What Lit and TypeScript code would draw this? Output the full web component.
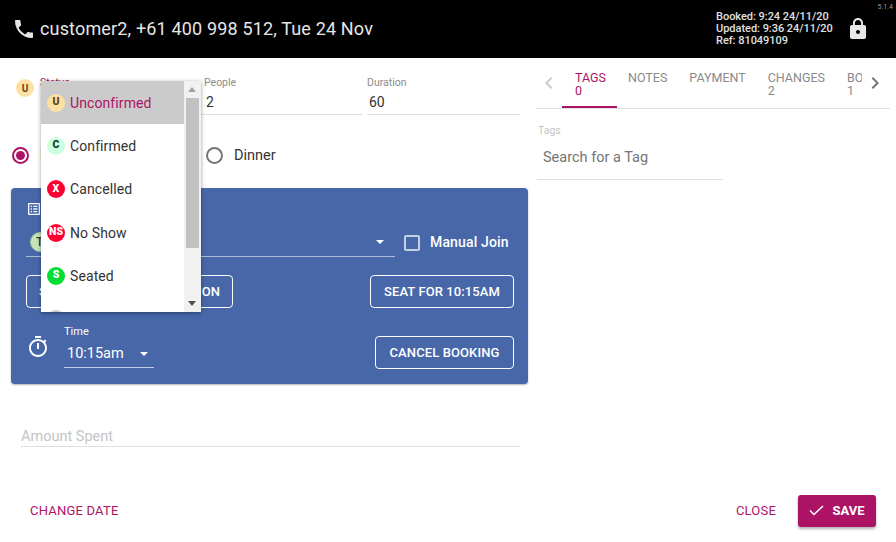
import { LitElement, html, css, svg } from "lit";
import { customElement } from "lit/decorators.js";

const icon = (d: string, size: number) => html`<svg width=${size} height=${size} viewBox="0 0 24 24" fill="currentColor">${svg`<path d=${d}></path>`}</svg>`;

const PHONE = "M6.62 10.79c1.44 2.83 3.76 5.14 6.59 6.59l2.2-2.2c.27-.27.67-.36 1.02-.24 1.12.37 2.33.57 3.57.57.55 0 1 .45 1 1V20c0 .55-.45 1-1 1-9.39 0-17-7.61-17-17 0-.55.45-1 1-1h3.5c.55 0 1 .45 1 1 0 1.25.2 2.45.57 3.57.11.35.03.74-.25 1.02l-2.2 2.2z";
const LOCK = "M18 8h-1V6c0-2.76-2.24-5-5-5S7 3.24 7 6v2H6c-1.1 0-2 .9-2 2v10c0 1.1.9 2 2 2h12c1.1 0 2-.9 2-2V10c0-1.1-.9-2-2-2zm-6 9c-1.1 0-2-.9-2-2s.9-2 2-2 2 .9 2 2-.9 2-2 2zm3.1-9H8.9V6c0-1.71 1.39-3.1 3.1-3.1 1.71 0 3.1 1.39 3.1 3.1v2z";
const TIMER = "M15 1H9v2h6V1zm-4 13h2V8h-2v6zm8.03-6.61l1.42-1.42c-.43-.51-.9-.99-1.41-1.41l-1.42 1.42C16.07 4.74 14.12 4 12 4c-4.97 0-9 4.03-9 9s4.02 9 9 9 9-4.03 9-9c0-2.12-.74-4.07-1.97-5.61zM12 20c-3.87 0-7-3.13-7-7s3.13-7 7-7 7 3.13 7 7-3.13 7-7 7z";
const LIST = "M19 5v14H5V5h14m1.1-2H3.9c-.5 0-.9.4-.9.9v16.2c0 .4.4.9.9.9h16.2c.4 0 .9-.5.9-.9V3.9c0-.5-.5-.9-.9-.9zM11 7h6v2h-6V7zm0 4h6v2h-6v-2zm0 4h6v2h-6zM7 7h2v2H7zm0 4h2v2H7zm0 4h2v2H7z";
const LEFT = "M15.41 7.41L14 6l-6 6 6 6 1.41-1.41L10.83 12z";
const RIGHT = "M10 6L8.59 7.41 13.17 12l-4.58 4.59L10 18l6-6z";

const MENU = [
  { l: "U", t: "Unconfirmed", bg: "#ffe0a3", fg: "#5a4a20", sel: true },
  { l: "C", t: "Confirmed", bg: "#ccffe0", fg: "#1d3b2c" },
  { l: "X", t: "Cancelled", bg: "#ff0033", fg: "#fff" },
  { l: "NS", t: "No Show", bg: "#ff0033", fg: "#fff" },
  { l: "S", t: "Seated", bg: "#00dd33", fg: "#fff" },
  { l: "F", t: "Finished", bg: "#cccccc", fg: "#fff" },
];

@customElement("app-root")
export class AppRoot extends LitElement {
  static styles = css`
    :host { display: block; height: 542px; width: 896px; overflow: hidden; position: relative; background: #fff; font-family: Roboto, sans-serif; color: rgba(0,0,0,.87); }
    * { box-sizing: border-box; }
    svg { display: block; }
    .header { height: 58px; background: #000; color: #e6e6e6; display: flex; align-items: center; padding-left: 12px; position: relative; }
    .title { font-size: 18px; letter-spacing: .16px; margin-left: 4px; flex: 1; white-space: nowrap; line-height: 24px; }
    .meta { font-size: 11px; letter-spacing: -.03px; line-height: 12px; font-weight: 500; color: #e0e0e0; width: 130px; }
    .lock { margin-right: 26px; color: #e8e8e8; }
    .version { position: absolute; right: 3px; top: 3px; font-size: 7px; line-height: 8px; color: #999; }
    .main { display: flex; height: 389px; }
    .left { width: 536px; flex: none; display: flex; flex-direction: column; }
    .right { flex: 1; min-width: 0; padding-right: 6px; }

    .top-row { display: flex; height: 57px; padding: 15px 0 0 16px; }
    .status-dot { width: 18px; height: 18px; border-radius: 50%; background: #ffe0a3; color: #5a4a20; font-size: 10px; font-weight: 700; display: flex; align-items: center; justify-content: center; margin-top: 6px; margin-right: 6px; flex: none; }
    .field { display: flex; flex-direction: column; border-bottom: 1px solid #e0e0e0; height: 42px; }
    .f-status { width: 164px; }
    .f-people { width: 159px; margin-right: 4px; }
    .f-duration { width: 153px; }
    .flabel { font-size: 10.5px; line-height: 12px; color: #8c8c8c; margin-top: 4px; }
    .flabel.active { color: #ad1365; }
    .fvalue { font-size: 14px; line-height: 20px; margin: 3px 0 0 2px; color: #333; }
    .radios { height: 73px; padding: 7px 0 0 12px; display: flex; align-items: center; font-size: 14.5px; color: #333; }
    .radio { width: 17px; height: 17px; border-radius: 50%; border: 2px solid #757575; flex: none; display: flex; align-items: center; justify-content: center; }
    .radio.on { border-color: #ad1365; }
    .radio.on::after { content: ""; width: 9px; height: 9px; border-radius: 50%; background: #ad1365; }
    .r1 { display: flex; align-items: center; gap: 11px; width: 194px; }
    .r2 { display: flex; align-items: center; gap: 11px; }

    .card { margin-left: 11px; width: 517px; height: 196px; background: #4767a9; border-radius: 4px; box-shadow: 0 1px 2px rgba(0,0,0,.3); padding: 12px 14px 0 15px; color: #fff; flex: none; }
    .card-head { height: 17px; display: flex; align-items: center; padding-left: 1px; font-size: 12px; gap: 6px; }
    .list-ic { color: #f4f6fb; margin-left: -1px; }
    .select-row { display: flex; align-items: center; height: 40px; }
    .select { width: 369px; height: 40px; border-bottom: 1px solid #aebcd9; display: flex; align-items: center; padding: 11px 11px 0 4px; flex: none; margin-right: 9px; justify-content: space-between; }
    .chip { width: 22px; height: 20px; border-radius: 10px; background: #c3e4bb; border: 1px solid #9fc797; color: #333; font-size: 12px; font-weight: 500; padding-left: 5px; line-height: 18px; }
    .arrow { width: 0; height: 0; border-left: 4.5px solid transparent; border-right: 4.5px solid transparent; border-top: 4.5px solid #fff; }
    .checkbox { width: 16px; height: 16px; border: 2px solid #c5cfe3; border-radius: 2px; flex: none; margin-right: 10px; margin-top: 12px; }
    .cb-label { font-size: 14px; font-weight: 500; letter-spacing: .15px; margin-top: 10px; white-space: nowrap; }
    .btn-row { display: flex; justify-content: space-between; margin-top: 18px; }
    .obtn { height: 33px; border: 1px solid #fff; border-radius: 4px; background: transparent; color: #fff; font: 500 13px Roboto, sans-serif; letter-spacing: .1px; display: inline-flex; align-items: center; justify-content: center; white-space: nowrap; padding: 0 0 1px; }
    .b1 { width: 207px; }
    .b2 { width: 144px; }
    .b3 { width: 139px; margin-top: 11px; }
    .time-row { display: flex; justify-content: space-between; margin-top: 17px; height: 46px; }
    .time-left { display: flex; }
    .timer { margin-top: 10px; }
    .time-col { margin-left: 14px; width: 90px; }
    .tlabel { font-size: 11px; line-height: 12px; margin-top: 1px; }
    .tsel { height: 28px; margin-top: 2px; border-bottom: 1px solid #c3cfe6; display: flex; align-items: center; justify-content: space-between; padding: 0 6px 0 3px; font-size: 14.5px; }

    .amount { margin: 42px 0 0 21px; width: 499px; height: 21px; border-bottom: 1px solid #e0e0e0; font-size: 14.5px; line-height: 20px; padding-top: 1px; color: #c4c4c4; flex: none; }
    .footer { display: flex; align-items: center; height: 32px; margin-top: 48px; padding: 0 20px 0 19px; }
    .tbtn { font-size: 13px; letter-spacing: .2px; color: #ad1365; padding: 0 11px 2px; }
    .actions { margin-left: auto; display: flex; align-items: center; }
    .save { width: 78px; height: 32px; background: #ad1365; color: #fff; border-radius: 3px; box-shadow: 0 2px 3px rgba(0,0,0,.3); display: flex; align-items: center; justify-content: center; gap: 8px; font-size: 13px; font-weight: 700; margin-left: 11px; padding-bottom: 1px; }

    .tabs { height: 51px; display: flex; border-bottom: 1px solid #e0e0e0; align-items: flex-start; }
    .chev { width: 26px; height: 50px; display: flex; align-items: center; justify-content: center; flex: none; }
    .chev.off { color: #ccc; }
    .chev.on { color: #757575; width: 28px; padding-right: 2px; }
    .tab-list { flex: 1; min-width: 0; display: flex; overflow: hidden; height: 50px; }
    .tab { font-size: 12.5px; line-height: 13px; color: #8a8a8a; padding: 13px 11px 0 11px; white-space: nowrap; height: 50px; flex: none; }
    .tab.active { color: #ad1365; border-bottom: 2px solid #ad1365; padding-left: 13px; }
    .tags { margin-left: 1px; width: 186px; height: 71px; border-bottom: 1px solid #e0e0e0; padding-top: 16px; }
    .tags-label { font-size: 10.5px; line-height: 12px; color: #c4c4c4; margin-left: 1px; }
    .tags-input { font-size: 14.5px; line-height: 20px; color: #757575; margin: 11px 0 0 6px; }

    .menu { position: absolute; left: 41px; top: 81px; width: 160px; height: 231px; background: #fff; box-shadow: 0 1px 4px rgba(0,0,0,.4); overflow: hidden; display: flex; }
    .items { width: 143px; flex: none; }
    .item { height: 43.3px; display: flex; align-items: center; padding-left: 6px; gap: 5px; font-size: 14px; color: #333; letter-spacing: .1px; white-space: nowrap; }
    .item.sel { background: #cbcbcb; color: #ad1365; }
    .dot { width: 18px; height: 18px; border-radius: 50%; display: flex; align-items: center; justify-content: center; font-size: 10.5px; font-weight: 900; padding-bottom: 2px; flex: none; }
    .scroll { width: 17px; background: #f1f1f1; position: relative; }
    .thumb { position: absolute; left: 2px; top: 17px; width: 13px; height: 150px; background: #c1c1c1; }
    .up { position: absolute; top: 6px; left: 4px; border-left: 4px solid transparent; border-right: 4px solid transparent; border-bottom: 5px solid #a3a3a3; }
    .down { position: absolute; bottom: 6px; left: 4px; border-left: 4px solid transparent; border-right: 4px solid transparent; border-top: 5px solid #505050; }
  `;

  render() {
    return html`
      <div class="header">
        ${icon(PHONE, 24)}
        <div class="title">customer2, +61 400 998 512, Tue 24 Nov</div>
        <div class="meta">Booked: 9:24 24/11/20<br />Updated: 9:36 24/11/20<br />Ref: 81049109</div>
        <span class="lock">${icon(LOCK, 24)}</span>
        <div class="version">5.1.4</div>
      </div>
      <div class="main">
        <div class="left">
          <div class="top-row">
            <div class="status-dot">U</div>
            <div class="field f-status"><div class="flabel active">Status</div></div>
            <div class="field f-people"><div class="flabel">People</div><div class="fvalue">2</div></div>
            <div class="field f-duration"><div class="flabel">Duration</div><div class="fvalue">60</div></div>
          </div>
          <div class="radios">
            <div class="r1"><span class="radio on"></span><span>Lunch</span></div>
            <div class="r2"><span class="radio"></span><span>Dinner</span></div>
          </div>
          <div class="card">
            <div class="card-head"><span class="list-ic">${icon(LIST, 16)}</span><span>Table</span></div>
            <div class="select-row">
              <div class="select"><span class="chip">T</span><span class="arrow"></span></div>
              <span class="checkbox"></span><span class="cb-label">Manual Join</span>
            </div>
            <div class="btn-row">
              <button class="obtn b1">SEAT FOR FULL RESERVATION</button>
              <button class="obtn b2">SEAT FOR 10:15AM</button>
            </div>
            <div class="time-row">
              <div class="time-left">
                <span class="timer">${icon(TIMER, 24)}</span>
                <div class="time-col">
                  <div class="tlabel">Time</div>
                  <div class="tsel"><span>10:15am</span><span class="arrow"></span></div>
                </div>
              </div>
              <button class="obtn b3">CANCEL BOOKING</button>
            </div>
          </div>
          <div class="amount">Amount Spent</div>
        </div>
        <div class="right">
          <div class="tabs">
            <div class="chev off">${icon(LEFT, 24)}</div>
            <div class="tab-list">
              <div class="tab active">TAGS<br />0</div>
              <div class="tab">NOTES</div>
              <div class="tab">PAYMENT</div>
              <div class="tab">CHANGES<br />2</div>
              <div class="tab">BOOKINGS<br />1</div>
            </div>
            <div class="chev on">${icon(RIGHT, 24)}</div>
          </div>
          <div class="tags">
            <div class="tags-label">Tags</div>
            <div class="tags-input">Search for a Tag</div>
          </div>
        </div>
      </div>
      <div class="footer">
        <span class="tbtn">CHANGE DATE</span>
        <div class="actions">
          <span class="tbtn">CLOSE</span>
          <div class="save">
            <svg width="15" height="11" viewBox="0 0 15 11" fill="none" stroke="currentColor" stroke-width="1.5">${svg`<path d="M1 5.5L5 9.5L14 1"></path>`}</svg>
            <span>SAVE</span>
          </div>
        </div>
      </div>
      <div class="menu">
        <div class="items">
          ${MENU.map(
            (m) => html`<div class="item ${m.sel ? "sel" : ""}">
              <span class="dot" style="background:${m.bg};color:${m.fg}">${m.l}</span><span>${m.t}</span>
            </div>`
          )}
        </div>
        <div class="scroll"><span class="up"></span><span class="thumb"></span><span class="down"></span></div>
      </div>
    `;
  }
}
